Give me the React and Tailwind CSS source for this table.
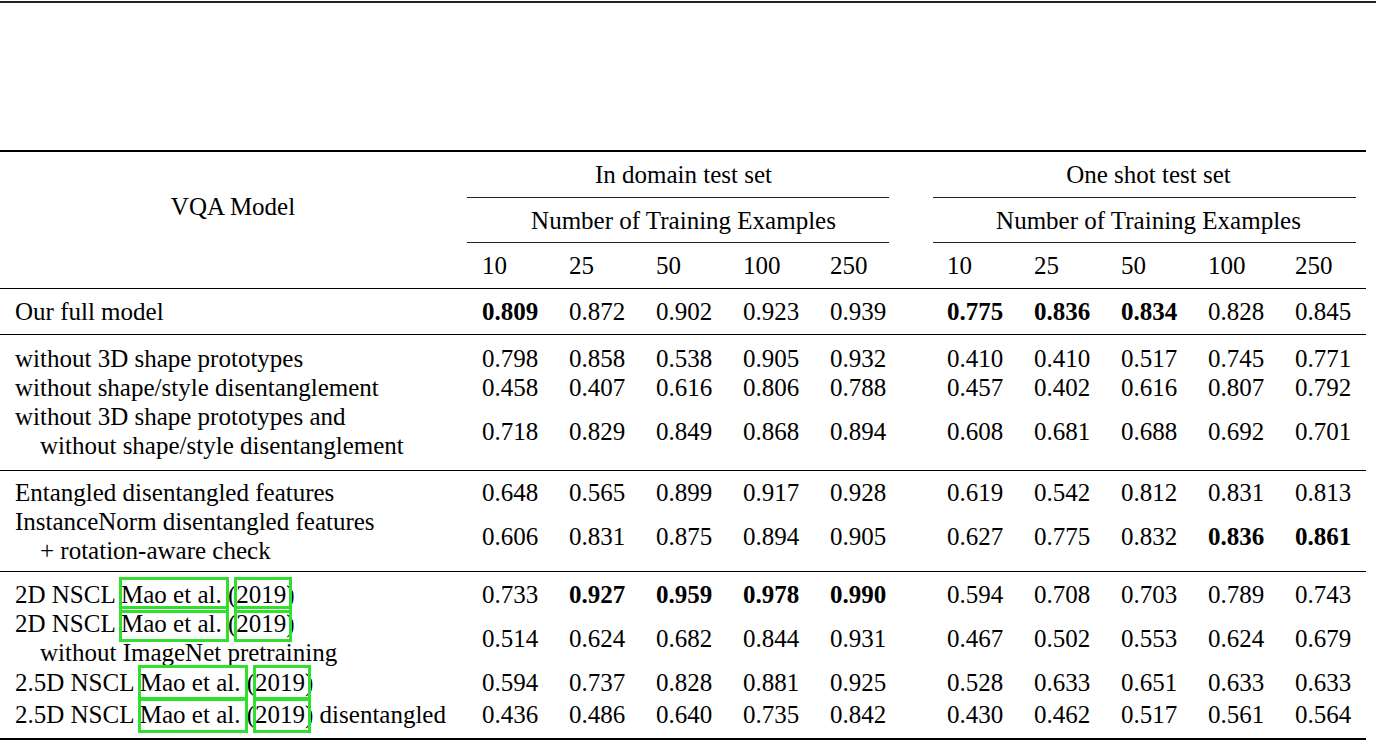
import React from "react";

const groups = [
  {
    pad: "pt-[9px] pb-[10px]",
    rows: [
      { label: ["without 3D shape prototypes"], h: "h-[29px]", a: ["0.798", "0.858", "0.538", "0.905", "0.932"], b: ["0.410", "0.410", "0.517", "0.745", "0.771"] },
      { label: ["without shape/style disentanglement"], h: "h-[29px]", a: ["0.458", "0.407", "0.616", "0.806", "0.788"], b: ["0.457", "0.402", "0.616", "0.807", "0.792"] },
      { label: ["without 3D shape prototypes and", "without shape/style disentanglement"], h: "h-[58px]", a: ["0.718", "0.829", "0.849", "0.868", "0.894"], b: ["0.608", "0.681", "0.688", "0.692", "0.701"] },
    ],
  },
  {
    pad: "pt-[7px] pb-[6px]",
    rows: [
      { label: ["Entangled disentangled features"], h: "h-[29px]", a: ["0.648", "0.565", "0.899", "0.917", "0.928"], b: ["0.619", "0.542", "0.812", "0.831", "0.813"] },
      { label: ["InstanceNorm disentangled features", "+ rotation-aware check"], h: "h-[58px]", a: ["0.606", "0.831", "0.875", "0.894", "0.905"], b: ["0.627", "0.775", "0.832", "*0.836", "*0.861"] },
    ],
  },
  {
    pad: "pt-[8px] pb-[7px]",
    rows: [
      { label: ["2D NSCL", "cite"], h: "h-[29px]", a: ["0.733", "*0.927", "*0.959", "*0.978", "*0.990"], b: ["0.594", "0.708", "0.703", "0.789", "0.743"] },
      { label: ["2D NSCL", "cite", "without ImageNet pretraining"], h: "h-[58px]", a: ["0.514", "0.624", "0.682", "0.844", "0.931"], b: ["0.467", "0.502", "0.553", "0.624", "0.679"] },
      { label: ["2.5D NSCL", "cite"], h: "h-[31px]", a: ["0.594", "0.737", "0.828", "0.881", "0.925"], b: ["0.528", "0.633", "0.651", "0.633", "0.633"] },
      { label: ["2.5D NSCL", "cite", "", " disentangled"], h: "h-[33px]", a: ["0.436", "0.486", "0.640", "0.735", "0.842"], b: ["0.430", "0.462", "0.517", "0.561", "0.564"] },
    ],
  },
];

// green hyperref-style box drawn over the link text
const Cite = ({ children, wide }) => (
  <span className="relative">
    {children}
    <span
      className={
        "absolute -left-[2px] -top-[4px] -bottom-[5px] border-[3px] border-[#2fe02f] " +
        (wide ? "-right-[6px]" : "-right-[1px]")
      }
    />
  </span>
);

const CiteText = ({ tail = "" }) => (
  <>
    <Cite>Mao et al. </Cite>(<Cite wide>2019</Cite>){tail}
  </>
);

const Nums = ({ vals }) => (
  <div className="grid grid-cols-[repeat(5,87px)] w-[435px] h-full">
    {vals.map((v, i) => (
      <div key={i} className={"pl-[16px] flex items-center " + (v.startsWith("*") ? "font-bold" : "")}>
        {v.replace("*", "")}
      </div>
    ))}
  </div>
);

const Label = ({ label }) => {
  if (label[1] === "cite") {
    return (
      <div className="flex flex-col justify-center h-full">
        <div className="whitespace-pre">
          {label[0]} <CiteText tail={label[3] || ""} />
        </div>
        {label[2] ? <div className="pl-[25px]">{label[2]}</div> : null}
      </div>
    );
  }
  return (
    <div className="flex flex-col justify-center h-full">
      <div>{label[0]}</div>
      {label[1] ? <div className="pl-[25px]">{label[1]}</div> : null}
    </div>
  );
};

const Row = ({ row }) => (
  <div className={"flex " + row.h}>
    <div className="w-[466px] pl-[15px]">
      <Label label={row.label} />
    </div>
    <Nums vals={row.a} />
    <div className="w-[30px]" />
    <Nums vals={row.b} />
  </div>
);

const HeadBlock = ({ title, ruleClass }) => (
  <div className="w-[435px] flex flex-col">
    <div className="h-[45px] flex items-center justify-center">{title}</div>
    <div className={"h-px bg-[#222] " + ruleClass} />
    <div className="h-[44px] flex items-center justify-center">Number of Training Examples</div>
    <div className={"h-px bg-[#222] " + ruleClass} />
    <div className="h-[45px] grid grid-cols-[repeat(5,87px)]">
      {["10", "25", "50", "100", "250"].map((n) => (
        <div key={n} className="pl-[16px] flex items-center">{n}</div>
      ))}
    </div>
  </div>
);

export default function App() {
  return (
    <div className="w-[1376px] h-[742px] bg-white text-black overflow-hidden font-['Liberation_Serif','Times_New_Roman',serif] text-[25px] leading-[29px]">
      <div className="mt-[1px] h-[2px] bg-[#222]" />
      <div className="h-[147px]" />
      <div className="w-[1366px]">
        <div className="h-[2px] bg-black" />
        <div className="flex">
          <div className="w-[466px] pt-[40px] text-center">VQA Model</div>
          <HeadBlock title="In domain test set" ruleClass="ml-[1px] mr-[12px]" />
          <div className="w-[30px]" />
          <HeadBlock title="One shot test set" ruleClass="ml-[2px] mr-[10px]" />
        </div>
        <div className="h-px bg-black" />
        <Row
          row={{
            label: ["Our full model"],
            h: "h-[45px]",
            a: ["*0.809", "0.872", "0.902", "0.923", "0.939"],
            b: ["*0.775", "*0.836", "*0.834", "0.828", "0.845"],
          }}
        />
        {groups.map((g, gi) => (
          <div key={gi}>
            <div className="h-px bg-black" />
            <div className={g.pad}>
              {g.rows.map((r, ri) => (
                <Row key={ri} row={r} />
              ))}
            </div>
          </div>
        ))}
        <div className="h-[2px] bg-black" />
      </div>
    </div>
  );
}
